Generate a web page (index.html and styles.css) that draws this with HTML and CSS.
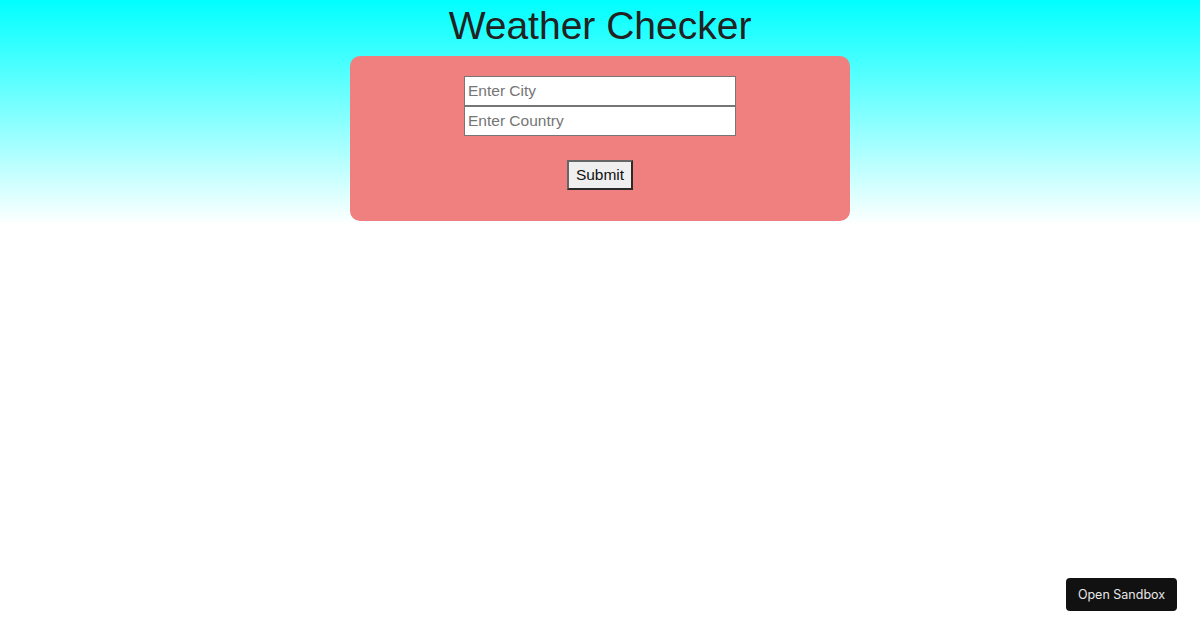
FILE: index.html
```html
<!DOCTYPE html>
<html>
<head>
<meta charset="utf-8">
<title>Weather Checker</title>
<link rel="stylesheet" href="styles.css">
</head>
<body>
<div class="page">
  <h1 class="title">Weather Checker</h1>
  <form class="card">
    <input class="field" type="text" placeholder="Enter City">
    <input class="field" type="text" placeholder="Enter Country">
    <button class="submit" type="button">Submit</button>
  </form>
</div>
<a class="sandbox">Open Sandbox</a>
</body>
</html>
```
FILE: styles.css
```css
html, body {
  margin: 0;
  padding: 0;
  background: #fff;
}
body {
  font-family: "Liberation Sans", Arial, sans-serif;
}
.page {
  background: linear-gradient(to bottom, #00ffff 0%, #ffffff 225px);
  height: 225px;
  display: flex;
  flex-direction: column;
  align-items: center;
}
.title {
  margin: 0;
  padding-top: 3px;
  font-size: 39px;
  font-weight: normal;
  line-height: 45px;
  color: #222;
  height: 53px;
}
.card {
  box-sizing: border-box;
  width: 500px;
  height: 165px;
  background: #f08080;
  border-radius: 10px;
  padding-top: 20px;
  display: flex;
  flex-direction: column;
  align-items: center;
}
.field {
  box-sizing: border-box;
  width: 272px;
  height: 30px;
  margin: 0;
  border: 1px solid #767676;
  padding: 0 4px 0 3px;
  font-family: "Liberation Sans", Arial, sans-serif;
  font-size: 15.5px;
  background: #fff;
  outline: none;
}
.field::placeholder {
  color: #757575;
}
.submit {
  box-sizing: border-box;
  margin-top: 24px;
  width: 66px;
  height: 30px;
  font-family: "Liberation Sans", Arial, sans-serif;
  font-size: 15.5px;
  color: #111;
  background: #efefef;
  border: 2px solid #666;
  border-right-color: #2a2a2a;
  border-bottom-color: #2a2a2a;
  padding: 0;
}
.sandbox {
  position: fixed;
  right: 23px;
  bottom: 19px;
  width: 111px;
  height: 33px;
  box-sizing: border-box;
  background: #111;
  color: #e8e8e8;
  border-radius: 4px;
  font-family: Inter, "Liberation Sans", sans-serif;
  font-size: 12.5px;
  display: flex;
  align-items: center;
  justify-content: center;
}
```
